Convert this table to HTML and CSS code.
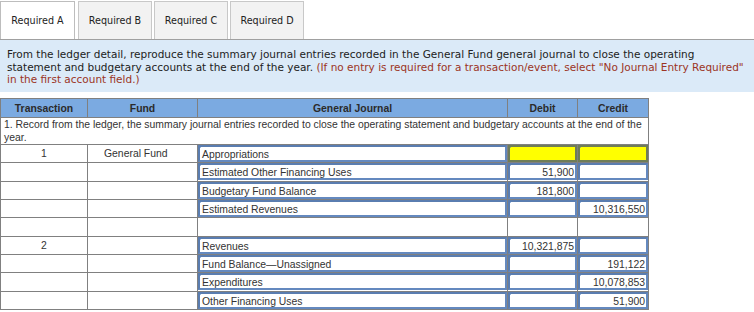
FILE: index.html
```html
<!DOCTYPE html>
<html>
<head>
<meta charset="utf-8">
<link rel="stylesheet" href="styles.css">
</head>
<body>
<div class="tabs">
  <div class="tab active">Required A</div>
  <div class="tab">Required B</div>
  <div class="tab">Required C</div>
  <div class="tab">Required D</div>
</div>
<div class="panel">
  From the ledger detail, reproduce the summary journal entries recorded in the General Fund general journal to close the operating statement and budgetary accounts at the end of the year. <span class="hint">(If no entry is required for a transaction/event, select "No Journal Entry Required" in the first account field.)</span>
</div>
<table class="journal">
  <colgroup>
    <col class="c-tr"><col class="c-fund"><col class="c-gj"><col class="c-dr"><col class="c-cr">
  </colgroup>
  <thead>
    <tr><th>Transaction</th><th>Fund</th><th>General Journal</th><th>Debit</th><th>Credit</th></tr>
  </thead>
  <tbody>
    <tr class="instr"><td colspan="5">1. Record from the ledger, the summary journal entries recorded to close the operating statement and budgetary accounts at the end of the year.</td></tr>
    <tr class="row">
      <td class="num">1</td><td class="fund">General Fund</td>
      <td class="in"><div class="box">Appropriations</div></td>
      <td class="in"><div class="box amt yellow"></div></td>
      <td class="in"><div class="box amt yellow"></div></td>
    </tr>
    <tr class="row">
      <td></td><td></td>
      <td class="in"><div class="box">Estimated Other Financing Uses</div></td>
      <td class="in"><div class="box amt">51,900</div></td>
      <td class="in"><div class="box amt"></div></td>
    </tr>
    <tr class="row">
      <td></td><td></td>
      <td class="in"><div class="box">Budgetary Fund Balance</div></td>
      <td class="in"><div class="box amt">181,800</div></td>
      <td class="in"><div class="box amt"></div></td>
    </tr>
    <tr class="row">
      <td></td><td></td>
      <td class="in"><div class="box">Estimated Revenues</div></td>
      <td class="in"><div class="box amt"></div></td>
      <td class="in"><div class="box amt">10,316,550</div></td>
    </tr>
    <tr class="row">
      <td></td><td></td><td></td><td></td><td></td>
    </tr>
    <tr class="row">
      <td class="num">2</td><td class="fund"></td>
      <td class="in"><div class="box">Revenues</div></td>
      <td class="in"><div class="box amt">10,321,875</div></td>
      <td class="in"><div class="box amt"></div></td>
    </tr>
    <tr class="row">
      <td></td><td></td>
      <td class="in"><div class="box">Fund Balance—Unassigned</div></td>
      <td class="in"><div class="box amt"></div></td>
      <td class="in"><div class="box amt">191,122</div></td>
    </tr>
    <tr class="row">
      <td></td><td></td>
      <td class="in"><div class="box">Expenditures</div></td>
      <td class="in"><div class="box amt"></div></td>
      <td class="in"><div class="box amt">10,078,853</div></td>
    </tr>
    <tr class="row">
      <td></td><td></td>
      <td class="in"><div class="box">Other Financing Uses</div></td>
      <td class="in"><div class="box amt"></div></td>
      <td class="in"><div class="box amt">51,900</div></td>
    </tr>
  </tbody>
</table>
</body>
</html>
```
FILE: styles.css
```css
html, body {
  margin: 0;
  padding: 0;
  background: #fff;
}
body {
  font-family: "DejaVu Sans", Verdana, sans-serif;
  color: #222;
}
.tabs {
  display: flex;
  gap: 2px;
  padding-top: 1px;
  height: 38px;
}
.tab {
  box-sizing: border-box;
  width: 74px;
  height: 38px;
  border: 1px solid #c8c8c8;
  border-bottom: none;
  background: #f2f2f2;
  font-size: 9.6px;
  display: flex;
  align-items: center;
  justify-content: center;
  color: #222;
}
.tab.active {
  width: 75px;
  background: #fff;
  border-color: #bdbdbd;
  margin-right: 1px;
}
.panel {
  box-sizing: border-box;
  height: 53px;
  background: #dbeaf8;
  border-top: 1px solid #a0a0a0;
  padding: 8px 6px 0 7px;
  font-size: 10.5px;
  line-height: 12.5px;
  color: #222;
}
.hint {
  color: #9c3424;
}
.journal {
  margin-top: 6px;
  border-collapse: collapse;
  table-layout: fixed;
  width: 648px;
  font-family: "Liberation Sans", Arial, sans-serif;
  font-size: 10.4px;
  color: #333;
}
.c-tr { width: 87px; }
.c-fund { width: 110px; }
.c-gj { width: 310px; }
.c-dr { width: 70px; }
.c-cr { width: 71px; }
.journal th, .journal td {
  border: 1px solid #808080;
  padding: 0;
}
.journal th {
  background: #7baae1;
  height: 18px;
  font-weight: bold;
  color: #2b2b2b;
  text-align: center;
}
.instr td {
  padding: 1px 3px 0;
  line-height: 12.5px;
  height: 25px;
  vertical-align: top;
}
.row {
  height: 18.33px;
}
.row td {
  height: 17px;
}
.num {
  text-align: center;
}
.fund {
  padding-left: 16px !important;
}
.box {
  box-sizing: border-box;
  height: 17px;
  border: 2px solid #6489bf;
  border-top-color: #5a7db0;
  border-left-color: #5a7db0;
  background: #fff;
  padding: 2px 1px 0 2px;
  line-height: 12px;
  white-space: nowrap;
  overflow: hidden;
  position: relative;
}
.box::before {
  content: "";
  position: absolute;
  left: -1px;
  top: -1px;
  border-top: 3px solid #2f6cc4;
  border-right: 3px solid transparent;
  border-bottom: 2px solid transparent;
}
.amt {
  text-align: right;
  padding-right: 1px;
}
.yellow {
  background: #ffff00;
  border-color: #6f7d57;
}
```
